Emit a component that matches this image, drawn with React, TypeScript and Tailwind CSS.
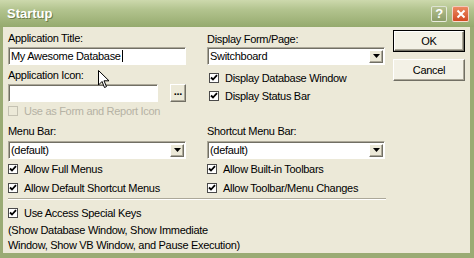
import React from "react";

const sunken =
  "border border-t-[#aca899] border-l-[#aca899] border-b-white border-r-white shadow-[inset_1px_1px_0_#716f64]";
const raised =
  "border border-t-white border-l-white border-b-[#716f64] border-r-[#716f64] shadow-[inset_-1px_-1px_0_#aca899]";

const Check: React.FC<{ label: string; checked?: boolean; disabled?: boolean; className?: string }> = ({
  label,
  checked = true,
  disabled = false,
  className = "",
}) => (
  <div className={`flex items-center h-[14px] ${className}`}>
    <span
      className={`w-[10px] h-[10px] flex items-center justify-center border ${
        disabled ? "border-[#c4c1b2] bg-[#ece9d8]" : "border-[#4a4a4a] bg-white"
      }`}
    >
      {checked && !disabled && (
        <svg width="8" height="8" viewBox="0 0 8 8">
          <path d="M1 3.5 L3 5.5 L7 1.2" fill="none" stroke="#000" strokeWidth="1.8" />
        </svg>
      )}
    </span>
    <span className={`ml-[6px] ${disabled ? "text-[#b5b2a4]" : "text-black"}`}>{label}</span>
  </div>
);

const Select: React.FC<{ value: string; className?: string }> = ({ value, className = "" }) => (
  <div className={`h-[18px] bg-white flex items-center ${sunken} ${className}`}>
    <span className="flex-1 pl-[2px] leading-none">{value}</span>
    <span className={`w-[14px] h-[13px] mr-[1px] bg-[#ece9d8] flex items-center justify-center ${raised}`}>
      <svg width="7" height="4" viewBox="0 0 7 4">
        <path d="M0 0 H7 L3.5 4 Z" fill="#000" />
      </svg>
    </span>
  </div>
);

const Label: React.FC<{ text: string; className?: string }> = ({ text, className = "" }) => (
  <div className={`h-[14px] leading-[14px] ${className}`}>{text}</div>
);

export default function App() {
  return (
    <div className="w-[474px] h-[258px] flex flex-col bg-[#ece9d8] text-[11px] text-black font-['Liberation_Sans',Arial,sans-serif] tracking-[-0.3px] overflow-hidden relative">
      {/* title bar */}
      <div className="h-[30px] flex items-center px-[7px] bg-[linear-gradient(#cdd9ad,#b3c48f_35%,#a3b67d_70%,#95aa6e)]">
        <span className="flex-1 text-white font-bold text-[13px] tracking-normal [text-shadow:1px_1px_0_#6c7d4b]">
          Startup
        </span>
        <span className="w-[16px] h-[16px] mr-[5px] rounded-[2px] border border-white/70 bg-[linear-gradient(#b6c291,#8c9c68)] flex items-center justify-center text-white font-bold text-[13px] leading-none">
          ?
        </span>
        <span className="w-[17px] h-[16px] mr-[-2px] rounded-[2px] border border-white/70 bg-[linear-gradient(#ec8a62,#d24a22)] flex items-center justify-center">
          <svg width="10" height="10" viewBox="0 0 10 10">
            <path d="M1.5 1.5 L8.5 8.5 M8.5 1.5 L1.5 8.5" stroke="#fff" strokeWidth="2" />
          </svg>
        </span>
      </div>

      {/* client */}
      <div className="flex-1 flex flex-col border-l-[3px] border-r-[4px] border-b-[5px] border-[#9aab74] pl-[5px] pr-[5px]">
        <div className="flex pt-[4px]">
          {/* left column */}
          <div className="w-[178px] flex flex-col">
            <Label text="Application Title:" />
            <div className={`mt-[2px] h-[18px] bg-white flex items-center pl-[2px] ${sunken}`}>
              <span>My Awesome Database</span>
              <span className="w-[1px] h-[12px] bg-black ml-[1px]" />
            </div>
            <Label text="Application Icon:" className="mt-[3px]" />
            <div className="mt-[2px] flex h-[18px]">
              <div className={`w-[150px] h-[18px] bg-white ${sunken}`} />
              <div
                className={`ml-[12px] w-[16px] h-[18px] bg-[#ece9d8] flex items-center justify-center font-bold leading-none pb-[3px] ${raised}`}
              >
                ...
              </div>
            </div>
            <Check label="Use as Form and Report Icon" disabled className="mt-[2px]" />
            <Label text="Menu Bar:" className="mt-[6px]" />
            <Select value="(default)" className="mt-[3px]" />
            <Check label="Allow Full Menus" className="mt-[3px]" />
            <Check label="Allow Default Shortcut Menus" className="mt-[5px]" />
          </div>

          {/* right column */}
          <div className="w-[178px] ml-[21px] flex flex-col">
            <Label text="Display Form/Page:" className="mt-[1px]" />
            <Select value="Switchboard" className="mt-[1px]" />
            <Check label="Display Database Window" className="mt-[6px] pl-[2px]" />
            <Check label="Display Status Bar" className="mt-[4px] pl-[2px]" />
            <Label text="Shortcut Menu Bar:" className="mt-[21px]" />
            <Select value="(default)" className="mt-[3px]" />
            <Check label="Allow Built-in Toolbars" className="mt-[3px]" />
            <Check label="Allow Toolbar/Menu Changes" className="mt-[5px]" />
          </div>

          {/* buttons */}
          <div className="ml-[8px] w-[72px] flex flex-col">
            <div className="mt-[-1px] h-[22px] border border-black bg-[#f3f1e6] flex items-center justify-center">
              <div className={`w-full h-full flex items-center justify-center ${raised}`}>OK</div>
            </div>
            <div className={`mt-[7px] h-[22px] bg-[#f3f1e6] flex items-center justify-center ${raised}`}>Cancel</div>
          </div>
        </div>

        <div className="mt-[3px] w-[378px] h-[2px] border-t border-t-[#aca899] border-b border-b-white" />

        <Check label="Use Access Special Keys" className="mt-[6px]" />
        <div className="mt-[3px] leading-[15px]">
          (Show Database Window, Show Immediate
          <br />
          Window, Show VB Window, and Pause Execution)
        </div>
      </div>

      {/* mouse cursor */}
      <svg className="absolute left-[98px] top-[70px]" width="12" height="19" viewBox="0 0 12 19">
        <path
          d="M0.5 0.5 L0.5 15 L4 11.5 L6.5 17.5 L8.5 16.6 L6 10.8 L11 10.8 Z"
          fill="#fff"
          stroke="#000"
          strokeWidth="1"
          strokeLinejoin="round"
        />
      </svg>
    </div>
  );
}
